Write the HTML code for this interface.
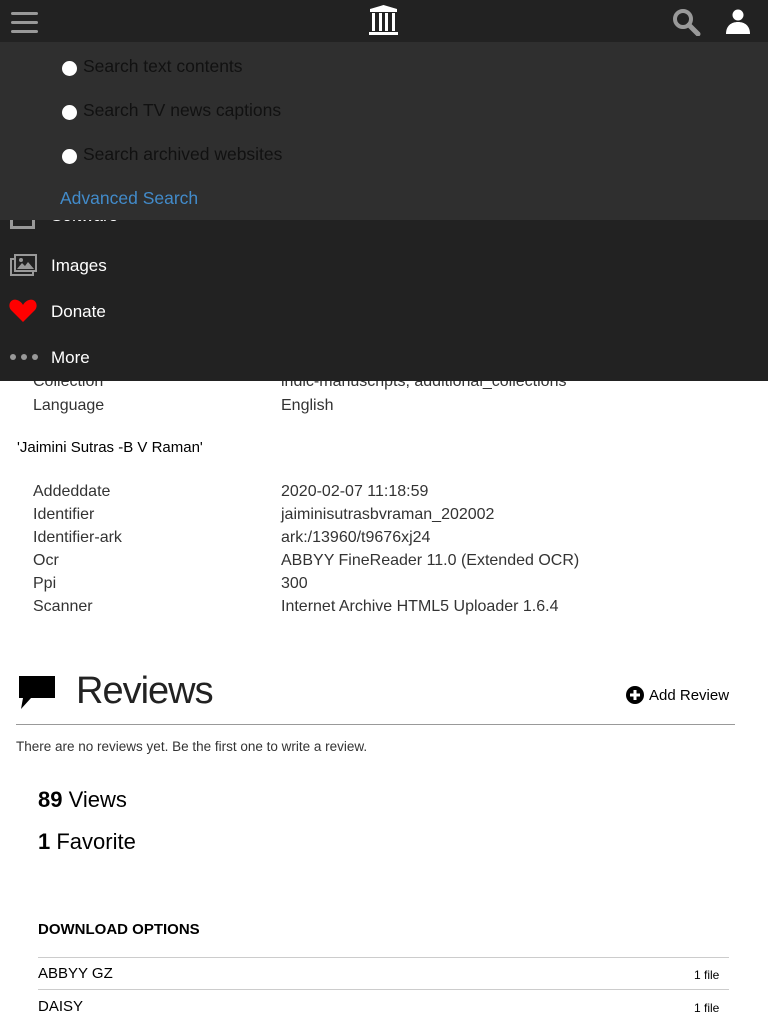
<!DOCTYPE html>
<html><head><meta charset="utf-8"><style>
*{margin:0;padding:0;box-sizing:border-box}
body{width:768px;height:1024px;overflow:hidden;background:#fff;font-family:"Liberation Sans",sans-serif;position:relative;color:#333}
.a{position:absolute;white-space:nowrap}
.lbl{font-size:16px;color:#333;font-weight:300}
</style></head><body>
<div class="a lbl" style="left:33px;top:373px">Collection</div>
<div class="a lbl" style="left:281px;top:373px">indic-manuscripts; additional_collections</div>
<div class="a lbl" style="left:33px;top:397px">Language</div>
<div class="a lbl" style="left:281px;top:397px">English</div>
<div class="a" style="left:17px;top:439px;font-size:15px;color:#000">'Jaimini Sutras -B V Raman'</div>
<div class="a lbl" style="left:33px;top:483px">Addeddate</div><div class="a lbl" style="left:281px;top:483px">2020-02-07 11:18:59</div>
<div class="a lbl" style="left:33px;top:506px">Identifier</div><div class="a lbl" style="left:281px;top:506px">jaiminisutrasbvraman_202002</div>
<div class="a lbl" style="left:33px;top:529px">Identifier-ark</div><div class="a lbl" style="left:281px;top:529px">ark:/13960/t9676xj24</div>
<div class="a lbl" style="left:33px;top:552px">Ocr</div><div class="a lbl" style="left:281px;top:552px">ABBYY FineReader 11.0 (Extended OCR)</div>
<div class="a lbl" style="left:33px;top:575px">Ppi</div><div class="a lbl" style="left:281px;top:575px">300</div>
<div class="a lbl" style="left:33px;top:598px">Scanner</div><div class="a lbl" style="left:281px;top:598px">Internet Archive HTML5 Uploader 1.6.4</div>
<svg class="a" style="left:17px;top:674px" width="40" height="36" viewBox="0 0 40 36"><path d="M2 2h36v22H14l-10 11 2-11H2z" fill="#000"/></svg>
<div class="a" style="left:76px;top:670px;font-size:38px;font-weight:300;color:#222;letter-spacing:-1px">Reviews</div>
<svg class="a" style="left:626px;top:686px" width="18" height="18" viewBox="0 0 18 18"><circle cx="9" cy="9" r="9" fill="#000"/><path d="M9 4v10M4 9h10" stroke="#fff" stroke-width="3"/></svg>
<div class="a" style="left:649px;top:687px;font-size:15px;color:#000">Add Review</div>
<div class="a" style="left:16px;top:724px;width:719px;height:1px;background:#999"></div>
<div class="a" style="left:16px;top:739px;font-size:13.5px;color:#333">There are no reviews yet. Be the first one to write a review.</div>
<div class="a" style="left:38px;top:787px;font-size:22px;color:#000"><b>89</b> Views</div>
<div class="a" style="left:38px;top:829px;font-size:22px;color:#000"><b>1</b> Favorite</div>
<div class="a" style="left:38px;top:921px;font-size:15px;font-weight:bold;color:#000">DOWNLOAD OPTIONS</div>
<div class="a" style="left:38px;top:957px;width:691px;height:1px;background:#ccc"></div>
<div class="a" style="left:38px;top:965px;font-size:15px;color:#000">ABBYY GZ</div>
<div class="a" style="left:694px;top:968px;font-size:12px;color:#000">1 file</div>
<div class="a" style="left:38px;top:989px;width:691px;height:1px;background:#ccc"></div>
<div class="a" style="left:38px;top:998px;font-size:15px;color:#000">DAISY</div>
<div class="a" style="left:694px;top:1001px;font-size:12px;color:#000">1 file</div>

<div class="a" style="left:0;top:0;width:768px;height:381px;background:#222"></div>
<div class="a" style="left:10px;top:207px;width:25px;height:22px;border:3px solid #999"></div>
<div class="a" style="left:51px;top:206px;font-size:17px;color:#fff">Software</div>
<svg class="a" style="left:10px;top:254px" width="27" height="22" viewBox="0 0 27 22"><rect x="1" y="5" width="22" height="16" fill="none" stroke="#999" stroke-width="2"/><rect x="5" y="1" width="21" height="16" fill="#222" stroke="#999" stroke-width="2"/><path d="M7 15l5-6 3 3 3-4 6 7z" fill="#999"/><circle cx="11" cy="6" r="2" fill="#999"/></svg>
<div class="a" style="left:51px;top:256px;font-size:17px;color:#fff">Images</div>
<svg class="a" style="left:9px;top:299px" width="28" height="24" viewBox="0 0 28 24"><path d="M14 23L2 11C-2 6 2-1 8 1c3 1 5 3 6 5 1-2 3-4 6-5 6-2 10 5 6 10z" fill="#f00"/></svg>
<div class="a" style="left:51px;top:302px;font-size:17px;color:#fff">Donate</div>
<div class="a" style="left:10px;top:354px;width:6px;height:6px;border-radius:3px;background:#999"></div>
<div class="a" style="left:21px;top:354px;width:6px;height:6px;border-radius:3px;background:#999"></div>
<div class="a" style="left:32px;top:354px;width:6px;height:6px;border-radius:3px;background:#999"></div>
<div class="a" style="left:51px;top:348px;font-size:17px;color:#fff">More</div>

<div class="a" style="left:0;top:42px;width:768px;height:178px;background:#2f2f2f"></div>
<div class="a" style="left:62px;top:61px;width:15px;height:15px;border-radius:8px;background:#fff"></div>
<div class="a" style="left:83px;top:56px;font-size:17.5px;color:#111">Search text contents</div>
<div class="a" style="left:62px;top:105px;width:15px;height:15px;border-radius:8px;background:#fff"></div>
<div class="a" style="left:83px;top:100px;font-size:17.5px;color:#111">Search TV news captions</div>
<div class="a" style="left:62px;top:149px;width:15px;height:15px;border-radius:8px;background:#fff"></div>
<div class="a" style="left:83px;top:144px;font-size:17.5px;color:#111">Search archived websites</div>
<div class="a" style="left:60px;top:188px;font-size:17.5px;color:#428bca">Advanced Search</div>

<div class="a" style="left:0;top:0;width:768px;height:42px;background:#222"></div>
<div class="a" style="left:11px;top:12px;width:27px;height:3px;background:#999;border-radius:2px"></div>
<div class="a" style="left:11px;top:21px;width:27px;height:3px;background:#999;border-radius:2px"></div>
<div class="a" style="left:11px;top:30px;width:27px;height:3px;background:#999;border-radius:2px"></div>
<svg class="a" style="left:368px;top:4px" width="31" height="32" viewBox="0 0 31 32"><path d="M2 5L15.5 1 29 5v3H2z" fill="#fff"/><rect x="4" y="9" width="3" height="18" fill="#fff"/><rect x="11" y="9" width="3" height="18" fill="#fff"/><rect x="17" y="9" width="3" height="18" fill="#fff"/><rect x="24" y="9" width="3" height="18" fill="#fff"/><rect x="1" y="28" width="29" height="3" fill="#fff"/></svg>
<svg class="a" style="left:672px;top:8px" width="32" height="28" viewBox="0 0 32 28"><circle cx="11" cy="11" r="8" fill="none" stroke="#999" stroke-width="4"/><path d="M17 17l9 9" stroke="#999" stroke-width="5" stroke-linecap="round"/></svg>
<svg class="a" style="left:725px;top:9px" width="26" height="26" viewBox="0 0 26 26"><circle cx="13" cy="6" r="5.5" fill="#fff"/><path d="M1 25c0-8 5-12 12-12s12 4 12 12z" fill="#fff"/></svg>
</body></html>
